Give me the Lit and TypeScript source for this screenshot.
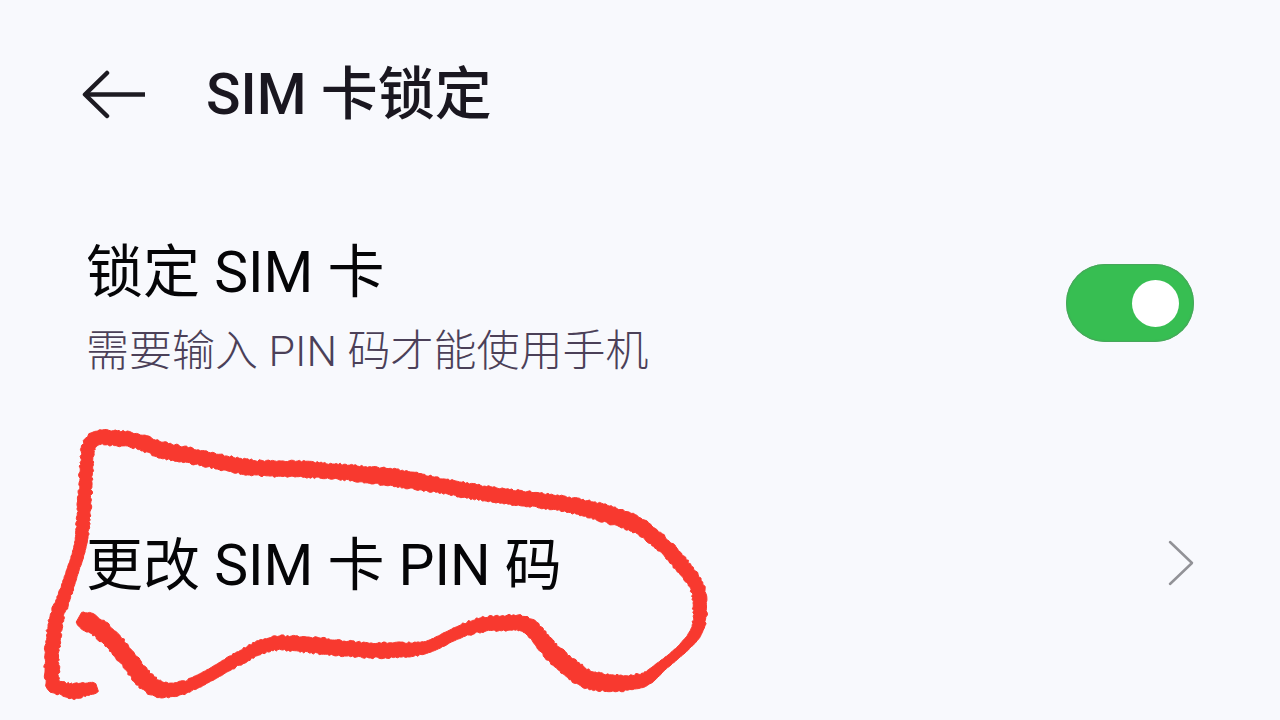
import { LitElement, html, css, svg } from "lit";
import { customElement, state } from "lit/decorators.js";

type Dab = [x: number, y: number, width: number];

// Centre line of the marker, with the thickness of the tip at each point.
const MARKER: Dab[] = [
  [98, 687, 6], [95, 688, 11], [86, 689, 13], [74, 691, 16], [63, 689, 13], [53, 685, 13], [52, 670, 14], [52, 653, 14],
  [56, 620, 14], [64, 597, 13], [72, 573, 12], [80, 547, 12], [83, 523, 13], [85, 493, 13],
  [87, 460, 13], [89, 446, 13], [97, 438, 14], [113, 438, 15], [137, 441, 15],
  [163, 450, 16], [197, 457, 15], [230, 464, 15], [257, 468, 15], [297, 469, 16],
  [330, 471, 15], [363, 474, 16], [403, 479, 17], [437, 485, 15], [470, 491, 15],
  [503, 496, 15], [537, 500, 15], [570, 505, 15], [603, 513, 17], [637, 525, 16],
  [663, 545, 15], [683, 567, 15], [697, 587, 14], [700, 607, 14], [697, 630, 12],
  [683, 648, 10], [663, 665, 10], [643, 680, 14], [617, 683, 16], [590, 680, 18],
  [570, 668, 19], [550, 650, 17], [533, 630, 16], [521, 623, 15], [503, 623, 15],
  [480, 625, 14], [457, 633, 12], [427, 647, 12], [397, 650, 15], [363, 650, 15],
  [330, 647, 16], [297, 644, 15], [270, 644, 14], [243, 656, 13], [210, 675, 12],
  [183, 688, 13], [163, 690, 15], [147, 682, 18], [127, 658, 17], [113, 641, 18],
  [97, 627, 18], [84, 620, 17], [79, 617, 11], [77, 616, 6],
];

function spline(a: number, b: number, c: number, d: number, t: number): number {
  return 0.5 * (2 * b + (c - a) * t + (2 * a - 5 * b + 4 * c - d) * t * t
    + (3 * b - a - 3 * c + d) * t * t * t);
}

// Turns the centre line into a closed outline with a slightly ragged edge.
function outline(dabs: Dab[]): string {
  let seed = 11;
  const noise = () => {
    seed = (seed * 16807) % 2147483647;
    return seed / 2147483647 - 0.5;
  };
  const line: Dab[] = [];
  for (let i = 0; i < dabs.length - 1; i++) {
    const p = [dabs[Math.max(i - 1, 0)], dabs[i], dabs[i + 1], dabs[Math.min(i + 2, dabs.length - 1)]];
    const steps = Math.max(2, Math.round(Math.hypot(p[2][0] - p[1][0], p[2][1] - p[1][1]) / 2));
    for (let s = 0; s < steps; s++) {
      const at = (k: number) => spline(p[0][k], p[1][k], p[2][k], p[3][k], s / steps);
      line.push([at(0), at(1), at(2)]);
    }
  }
  const left: string[] = [];
  const right: string[] = [];
  for (let i = 1; i < line.length - 1; i++) {
    const dx = line[i + 1][0] - line[i - 1][0];
    const dy = line[i + 1][1] - line[i - 1][1];
    const len = Math.hypot(dx, dy) || 1;
    const [x, y, w] = line[i];
    const rough = w > 12.5 ? 2 : 0.5;
    const l = w / 2 + noise() * rough;
    const r = w / 2 + noise() * rough;
    left.push(`${(x - (dy / len) * l).toFixed(1)} ${(y + (dx / len) * l).toFixed(1)}`);
    right.push(`${(x + (dy / len) * r).toFixed(1)} ${(y - (dx / len) * r).toFixed(1)}`);
  }
  return `M${left.join("L")}L${right.reverse().join("L")}Z`;
}

@customElement("app-root")
export class AppRoot extends LitElement {
  @state() private locked = true;

  static styles = css`
    :host {
      display: block;
      position: relative;
      box-sizing: border-box;
      min-height: 100vh;
      padding: 55px 0 40px;
      overflow: hidden;
      background: #f8f9fd;
      color: #050507;
      font-family: Roboto, "Noto Sans CJK SC", sans-serif;
    }
    .header {
      display: flex;
      align-items: center;
      gap: 60px;
      padding: 0 82px;
    }
    .back {
      display: flex;
      padding: 0;
      border: 0;
      background: none;
      color: #1d1b22;
    }
    .title {
      margin: 0;
      color: #1a1720;
      font-size: 57px;
      font-weight: 500;
      line-height: 80px;
    }
    .row {
      display: flex;
      align-items: center;
      justify-content: space-between;
      box-sizing: border-box;
      width: 100%;
      padding: 0 86px;
      border: 0;
      background: none;
      color: inherit;
      font-family: inherit;
      text-align: left;
    }
    .lock {
      align-items: flex-start;
      margin-top: 98px;
    }
    .change {
      margin-top: 137px;
    }
    .texts {
      display: flex;
      flex-direction: column;
    }
    .label {
      font-size: 57px;
      font-weight: 400;
      line-height: 80px;
    }
    .hint {
      color: #4b4058;
      font-size: 43px;
      font-weight: 300;
      line-height: 76px;
    }
    .switch {
      appearance: none;
      display: flex;
      align-items: center;
      box-sizing: border-box;
      flex: none;
      width: 128px;
      height: 78px;
      margin: 31px 0 0;
      padding: 0 15px;
      border-radius: 39px;
      background: #c9cbd1;
    }
    .switch::before {
      content: "";
      width: 47px;
      height: 47px;
      border-radius: 50%;
      background: #ffffff;
    }
    .switch:checked {
      justify-content: flex-end;
      background: #37be52;
      box-shadow: inset 0 0 1px 1px #4aa45c;
    }
    .chevron {
      flex: none;
    }
    .marker {
      position: absolute;
      top: 0;
      left: 0;
      pointer-events: none;
    }
  `;

  private toggle(event: Event) {
    this.locked = (event.target as HTMLInputElement).checked;
  }

  render() {
    return html`
      <header class="header">
        <button class="back" aria-label="返回">
          <svg width="64" height="50" viewBox="0 0 64 50" fill="none" stroke="currentColor"
            stroke-width="4.5" stroke-linejoin="round">
            <path d="M25 3 3 24.500 25 46" stroke-linecap="round" /><path d="M4 24.500h59" />
          </svg>
        </button>
        <h1 class="title">SIM 卡锁定</h1>
      </header>
      <div class="row lock">
        <label class="texts" for="lock">
          <span class="label">锁定 SIM 卡</span>
          <span class="hint">需要输入 PIN 码才能使用手机</span>
        </label>
        <input class="switch" id="lock" type="checkbox" role="switch"
          .checked=${this.locked} @change=${this.toggle} />
      </div>
      <button class="row change">
        <span class="label">更改 SIM 卡 PIN 码</span>
        <svg class="chevron" width="28" height="54" viewBox="0 0 28 54" fill="none"
          stroke="#929297" stroke-width="2.500" stroke-linecap="round" stroke-linejoin="round">
          <path d="M4 3 26 24 4 45" />
        </svg>
      </button>
      <svg class="marker" width="720" height="720" viewBox="0 0 720 720" aria-hidden="true">
        ${svg`<path d=${outline(MARKER)} fill="#f8392f" stroke="#f8392f" stroke-width="1" stroke-linejoin="round" />`}
      </svg>
    `;
  }
}
